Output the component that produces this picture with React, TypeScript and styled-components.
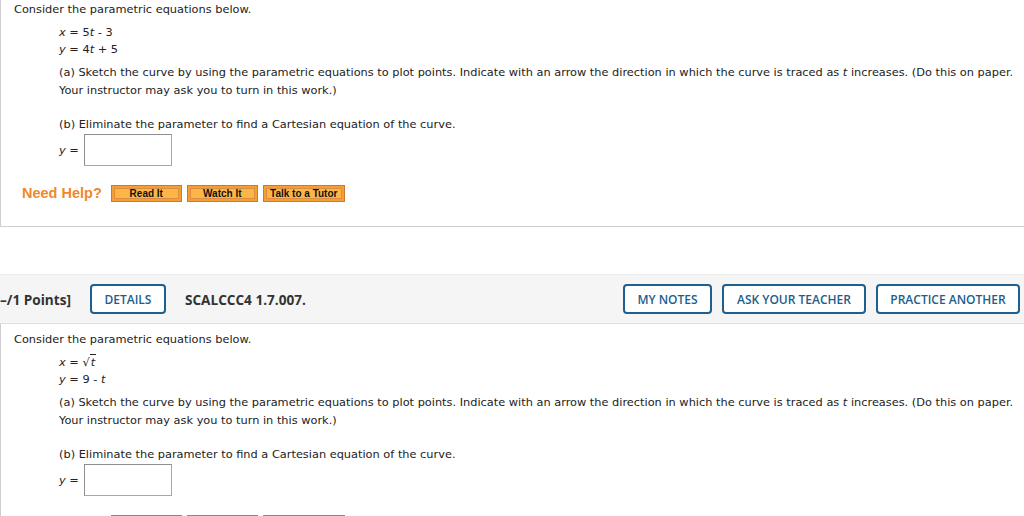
import React from 'react'
import styled, { createGlobalStyle } from 'styled-components'

const GlobalStyle = createGlobalStyle`
  html, body {
    margin: 0;
    padding: 0;
    background: #ffffff;
  }
  body {
    font-family: "DejaVu Sans", Verdana, sans-serif;
    color: #222222;
    overflow: hidden;
  }
`

const Page = styled.div`
  width: 1024px;
`

const QuestionBody = styled.div<{ $top: number }>`
  border-left: 1px solid #cfcfcf;
  border-bottom: 1px solid #cfcfcf;
  padding: ${(p) => p.$top}px 13px 0 13px;
  font-size: 11.35px;
`

const Intro = styled.p`
  margin: 0;
  line-height: 14px;
`

const Indented = styled.div`
  margin-left: 45px;
`

const Equations = styled(Indented)`
  margin-top: 8px;
  line-height: 17px;
`

const Paragraph = styled(Indented)<{ $gap: number }>`
  margin-top: ${(p) => p.$gap}px;
  line-height: 18px;
  white-space: nowrap;
`

const AnswerRow = styled(Indented)`
  margin-top: 1px;
  display: flex;
  align-items: center;
  gap: 5px;
`

const AnswerInput = styled.input`
  width: 88px;
  height: 32px;
  box-sizing: border-box;
  border: 1px solid #a8a8a8;
  border-top-color: #8f8f8f;
  border-left-color: #8f8f8f;
  margin: 0;
  padding: 0;
  background: #fff;
`

const Sqrt = styled.span`
  white-space: nowrap;
`

const Radicand = styled.span`
  border-top: 1px solid #222;
  padding: 0 1px;
`

const HelpRow = styled.div`
  display: flex;
  align-items: center;
  height: 28px;
  margin-top: 13px;
  padding-left: 8px;
  padding-bottom: 19px;
`

const HelpLabel = styled.span`
  font-family: "Liberation Sans", Arial, sans-serif;
  font-weight: 700;
  font-size: 14.5px;
  color: #f0882a;
  margin-right: 9px;
`

const HelpButton = styled.button<{ $w: number }>`
  width: ${(p) => p.$w}px;
  height: 17px;
  margin: 0 5px 0 0;
  padding: 0;
  box-sizing: border-box;
  border: 1px solid #c97a2c;
  background: #fcb648;
  box-shadow: inset 0 0 0 2px #f59e33, inset 0 0 0 3px #dc8e3e;
  font-family: "Liberation Sans", Arial, sans-serif;
  font-weight: 700;
  font-size: 10px;
  color: #111;
  line-height: 15px;
`

const Spacer = styled.div`
  height: 47px;
`

const HeaderBar = styled.div`
  display: flex;
  align-items: center;
  height: 48px;
  background: #f5f5f5;
  border-top: 1px solid #ebebeb;
  border-bottom: 1px solid #dedede;
  font-family: "Open Sans", sans-serif;
  padding-right: 4px;
`

const Points = styled.span`
  font-weight: 700;
  font-size: 13.6px;
  color: #333;
  margin-right: 19px;
`

const Reference = styled.span`
  font-weight: 700;
  font-size: 13.6px;
  color: #333;
  margin-left: 19px;
`

const OutlineButton = styled.button<{ $w: number }>`
  width: ${(p) => p.$w}px;
  height: 30px;
  box-sizing: border-box;
  padding: 0;
  border: 2px solid #1f5f8e;
  border-radius: 4px;
  background: #ffffff;
  color: #1e5d8c;
  font-family: "Open Sans", sans-serif;
  font-weight: 600;
  font-size: 12px;
`

const Actions = styled.div`
  margin-left: auto;
  display: flex;
  gap: 10px;
`

interface QuestionProps {
  top: number
  xEq: React.ReactNode
  yEq: React.ReactNode
}

const Question: React.FC<QuestionProps> = ({ top, xEq, yEq }) => (
  <QuestionBody $top={top}>
    <Intro>Consider the parametric equations below.</Intro>
    <Equations>
      <div>{xEq}</div>
      <div>{yEq}</div>
    </Equations>
    <Paragraph $gap={5}>
      (a) Sketch the curve by using the parametric equations to plot points. Indicate with an arrow the
      direction in which the curve is traced as <i>t</i> increases. (Do this on paper.
      <br />
      Your instructor may ask you to turn in this work.)
    </Paragraph>
    <Paragraph $gap={16}>(b) Eliminate the parameter to find a Cartesian equation of the curve.</Paragraph>
    <AnswerRow>
      <span>
        <i>y</i> =
      </span>
      <AnswerInput type="text" />
    </AnswerRow>
    <HelpRow>
      <HelpLabel>Need Help?</HelpLabel>
      <HelpButton $w={71}>Read It</HelpButton>
      <HelpButton $w={71}>Watch It</HelpButton>
      <HelpButton $w={82}>Talk to a Tutor</HelpButton>
    </HelpRow>
  </QuestionBody>
)

const App: React.FC = () => (
  <Page>
    <GlobalStyle />
    <Question
      top={2}
      xEq={
        <>
          <i>x</i> = 5<i>t</i> - 3
        </>
      }
      yEq={
        <>
          <i>y</i> = 4<i>t</i> + 5
        </>
      }
    />
    <Spacer />
    <HeaderBar>
      <Points>–/1 Points]</Points>
      <OutlineButton $w={76}>DETAILS</OutlineButton>
      <Reference>SCALCCC4 1.7.007.</Reference>
      <Actions>
        <OutlineButton $w={89}>MY NOTES</OutlineButton>
        <OutlineButton $w={144}>ASK YOUR TEACHER</OutlineButton>
        <OutlineButton $w={144}>PRACTICE ANOTHER</OutlineButton>
      </Actions>
    </HeaderBar>
    <Question
      top={8}
      xEq={
        <>
          <i>x</i> ={' '}
          <Sqrt>
            √<Radicand>
              <i>t</i>
            </Radicand>
          </Sqrt>
        </>
      }
      yEq={
        <>
          <i>y</i> = 9 - <i>t</i>
        </>
      }
    />
  </Page>
)

export default App
